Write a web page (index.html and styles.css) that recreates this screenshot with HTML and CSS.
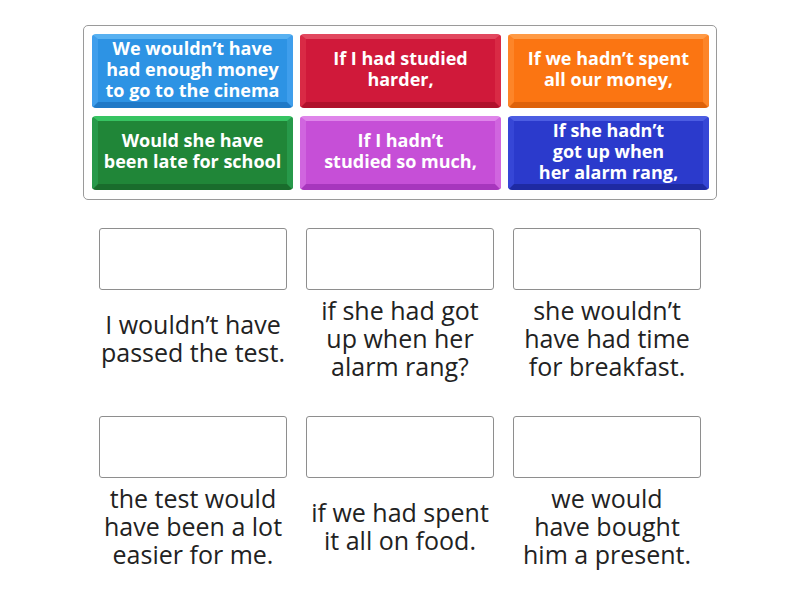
FILE: index.html
```html
<!DOCTYPE html>
<html>
<head>
<meta charset="utf-8">
<link rel="stylesheet" href="styles.css">
</head>
<body>
<div class="page">
  <div class="bank">
    <div class="tile blue">We wouldn’t have<br>had enough money<br>to go to the cinema</div>
    <div class="tile red">If I had studied<br>harder,</div>
    <div class="tile orange">If we hadn’t spent<br>all our money,</div>
    <div class="tile green">Would she have<br>been late for school</div>
    <div class="tile purple">If I hadn’t<br>studied so much,</div>
    <div class="tile navy">If she hadn’t<br>got up when<br>her alarm rang,</div>
  </div>
  <div class="targets">
    <div class="cell"><div class="slot"></div><div class="label">I wouldn’t have<br>passed the test.</div></div>
    <div class="cell"><div class="slot"></div><div class="label">if she had got<br>up when her<br>alarm rang?</div></div>
    <div class="cell"><div class="slot"></div><div class="label">she wouldn’t<br>have had time<br>for breakfast.</div></div>
    <div class="cell"><div class="slot"></div><div class="label">the test would<br>have been a lot<br>easier for me.</div></div>
    <div class="cell"><div class="slot"></div><div class="label">if we had spent<br>it all on food.</div></div>
    <div class="cell"><div class="slot"></div><div class="label">we would<br>have bought<br>him a present.</div></div>
  </div>
</div>
</body>
</html>
```

FILE: styles.css
```css
html, body {
  margin: 0;
  padding: 0;
  background: #ffffff;
}
body {
  font-family: "Open Sans", "DejaVu Sans", sans-serif;
}
.page {
  width: 800px;
  height: 600px;
  padding-top: 25px;
  box-sizing: border-box;
  display: flex;
  flex-direction: column;
  align-items: center;
}
.bank {
  width: 634px;
  box-sizing: border-box;
  border: 1px solid #9a9a9a;
  border-radius: 5px;
  padding: 8px 8px 9px 8px;
  display: grid;
  grid-template-columns: repeat(3, 201px);
  grid-auto-rows: 74px;
  column-gap: 7px;
  row-gap: 8px;
}
.tile {
  box-sizing: border-box;
  border-radius: 4px;
  border-style: solid;
  border-width: 5px 6px 6px 6px;
  color: #ffffff;
  font-weight: 700;
  font-size: 18px;
  line-height: 21px;
  text-align: center;
  display: flex;
  align-items: center;
  justify-content: center;
  padding: 0 0 3px 0;
  white-space: nowrap;
}
.blue { background: #2d93e4; border-color: #58b1f1 #3f9eec #1f79c7 #3f9eec; }
.red { background: #d0193a; border-color: #e2485f #d92a45 #b0112c #d92a45; }
.orange { background: #fb7512; border-color: #ff9a45 #fd8528 #de620a #fd8528; }
.green { background: #208638; border-color: #36c462 #27994a #196c2c #27994a; }
.purple { background: #c64fd7; border-color: #df85ea #d065df #a736bd #d065df; }
.navy { background: #2b3acc; border-color: #4c5de2 #3646d6 #1e2aa3 #3646d6; }

.targets {
  margin-top: 28px;
  display: grid;
  grid-template-columns: repeat(3, 188px);
  column-gap: 19px;
  row-gap: 28px;
}
.cell {
  display: flex;
  flex-direction: column;
}
.slot {
  height: 62px;
  box-sizing: border-box;
  border: 1px solid #8e8e8e;
  border-radius: 3px;
  background: #ffffff;
}
.label {
  height: 98px;
  padding-bottom: 2px;
  box-sizing: border-box;
  display: flex;
  align-items: center;
  justify-content: center;
  text-align: center;
  font-size: 25px;
  line-height: 28px;
  color: #222222;
  white-space: nowrap;
}
```
